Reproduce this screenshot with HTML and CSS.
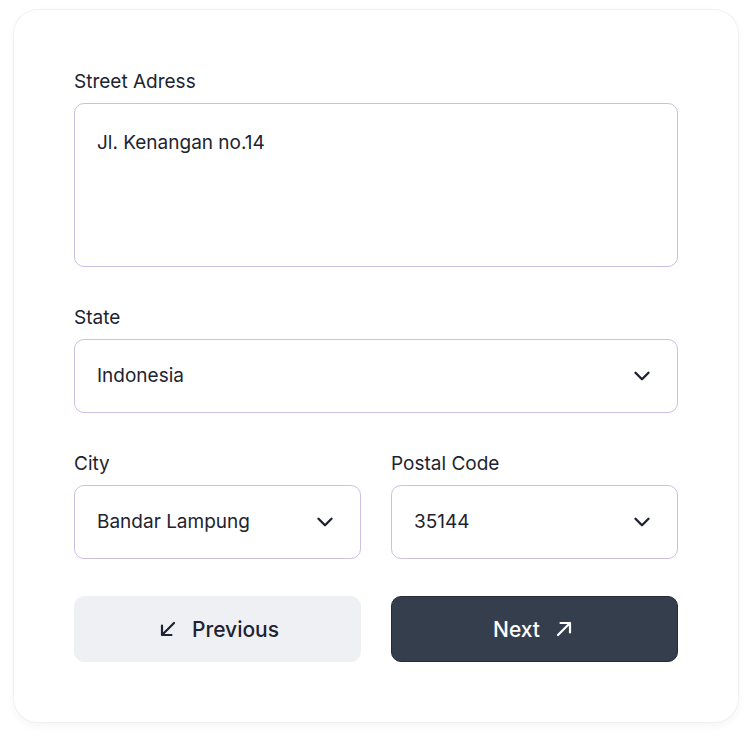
FILE: index.html
```html
<!DOCTYPE html>
<html lang="en">
<head>
    <meta charset="UTF-8">
    <meta name="viewport" content="width=device-width, initial-scale=1.0">
    <title>Address Form</title>
    <link rel="stylesheet" href="styles.css">
</head>
<body>
    <form class="card">
        <div class="field">
            <label class="label" for="street">Street Adress</label>
            <div class="textarea" id="street">Jl. Kenangan no.14</div>
        </div>

        <div class="field">
            <label class="label">State</label>
            <div class="select">
                <span>Indonesia</span>
                <svg class="chevron" viewBox="0 0 24 24"><path d="M6 9l6 6 6-6"/></svg>
            </div>
        </div>

        <div class="row">
            <div class="field">
                <label class="label">City</label>
                <div class="select">
                    <span>Bandar Lampung</span>
                    <svg class="chevron" viewBox="0 0 24 24"><path d="M6 9l6 6 6-6"/></svg>
                </div>
            </div>
            <div class="field">
                <label class="label">Postal Code</label>
                <div class="select">
                    <span>35144</span>
                    <svg class="chevron" viewBox="0 0 24 24"><path d="M6 9l6 6 6-6"/></svg>
                </div>
            </div>
        </div>

        <div class="row buttons">
            <button type="button" class="btn btn-light">
                <svg class="arrow" viewBox="0 0 24 24"><path d="M18 6L6 18M6 8.5V18h9.5"/></svg>
                Previous
            </button>
            <button type="button" class="btn btn-dark">
                Next
                <svg class="arrow" viewBox="0 0 24 24"><path d="M6 18L18 6M8.5 6H18v9.5"/></svg>
            </button>
        </div>
    </form>
</body>
</html>
```

FILE: styles.css
```css
body {
    margin: 0;
    padding: 10px 14px;
    background: #ffffff;
    font-family: Inter, "Liberation Sans", sans-serif;
    color: #1d2330;
}

.card {
    width: 724px;
    box-sizing: border-box;
    padding: 60px 60px 60px;
    border-radius: 24px;
    background: #fff;
    box-shadow: 0 0 0 1px #f1f1f3, 0 3px 10px rgba(0, 0, 0, 0.05);
    display: flex;
    flex-direction: column;
    gap: 39px;
}

.field {
    display: flex;
    flex-direction: column;
    gap: 9px;
}

.label {
    font-size: 19px;
    line-height: 24px;
}

.textarea,
.select {
    border: 1.5px solid #cdbfe0;
    border-radius: 10px;
    box-sizing: border-box;
    font-size: 19px;
    line-height: 24px;
}

.textarea {
    height: 164px;
    padding: 27px 22px;
}

.select {
    height: 74px;
    padding: 0 22px 0 22px;
    display: flex;
    align-items: center;
    justify-content: space-between;
}

.chevron {
    width: 26px;
    height: 26px;
    fill: none;
    stroke: #1d2330;
    stroke-width: 2.2;
    stroke-linecap: round;
    stroke-linejoin: round;
}

.row {
    display: grid;
    grid-template-columns: 1fr 1fr;
    gap: 30px;
}

.buttons {
    margin-top: -2px;
}

.btn {
    height: 66px;
    border-radius: 10px;
    font-family: inherit;
    font-size: 21px;
    font-weight: 500;
    display: flex;
    align-items: center;
    justify-content: center;
    gap: 12px;
    cursor: pointer;
}

.btn-light {
    background: #eff0f4;
    border: 1px solid #eff0f4;
    color: #1d2330;
}

.btn-dark {
    background: #353e4c;
    border: 1px solid #252c37;
    color: #fff;
}

.arrow {
    width: 24px;
    height: 24px;
    fill: none;
    stroke: currentColor;
    stroke-width: 2.2;
    stroke-linecap: round;
    stroke-linejoin: round;
}
```
